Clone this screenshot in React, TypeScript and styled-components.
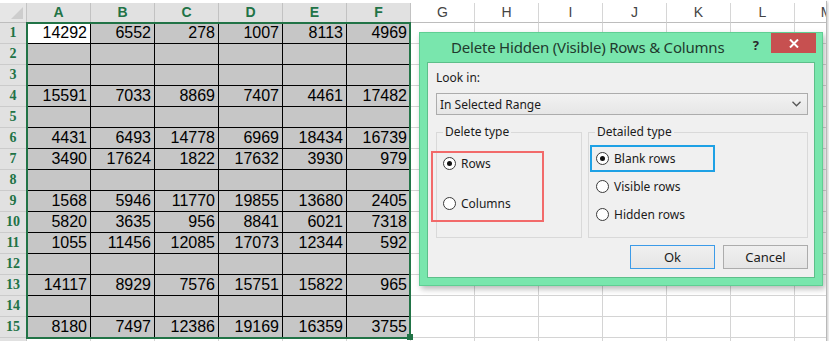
import React from 'react';
import styled, { createGlobalStyle } from 'styled-components';

const GlobalStyle = createGlobalStyle`
  html, body { margin: 0; padding: 0; background: #ffffff; }
  body { font-family: "Liberation Sans", Arial, sans-serif; }
`;

const GREEN = '#217346';

const Frame = styled.div`
  position: relative;
  width: 826px;
  height: 341px;
  box-sizing: border-box;
  padding-top: 3px;
  overflow: hidden;
  background: #ffffff;
  box-shadow: 1px 1px 0 #b9b9b9, 2px 2px 3px rgba(0, 0, 0, 0.22);
`;

const Sheet = styled.div`
  display: grid;
  grid-template-columns: 27px repeat(13, 64px);
  grid-template-rows: 20px repeat(16, 21px);
`;

const Corner = styled.div`
  position: relative;
  background: #e6e6e6;
  border-right: 1px solid #c4c4c4;
  border-bottom: 1px solid #bdbdbd;
`;

const CornerTriangle = styled.span`
  position: absolute;
  right: 3px;
  bottom: 3px;
  width: 0;
  height: 0;
  border-left: 12px solid transparent;
  border-bottom: 12px solid #cdcdcd;
`;

const ColHeader = styled.div<{ $selected: boolean }>`
  box-sizing: border-box;
  background: ${(p) => (p.$selected ? '#e1e1e1' : '#ffffff')};
  border-right: 1px solid ${(p) => (p.$selected ? '#c2c2c2' : '#d6d6d6')};
  border-bottom: 1px solid #bdbdbd;
  color: ${(p) => (p.$selected ? GREEN : '#444444')};
  font-weight: ${(p) => (p.$selected ? 700 : 400)};
  font-size: 14px;
  line-height: 19px;
  text-align: center;
`;

const RowHeader = styled.div`
  box-sizing: border-box;
  background: #e1e1e1;
  border-right: 1px solid #c4c4c4;
  border-bottom: 1px solid #cbcbcb;
  color: ${GREEN};
  font-family: "Liberation Serif", "Times New Roman", serif;
  font-weight: 700;
  font-size: 14px;
  line-height: 20px;
  text-align: center;
`;

type CellKind = 'data' | 'active' | 'blank';

const Cell = styled.div<{ $kind: CellKind }>`
  box-sizing: border-box;
  background: ${(p) => (p.$kind === 'data' ? '#c6c6c6' : '#ffffff')};
  border-right: 1px solid ${(p) => (p.$kind === 'blank' ? '#d4d4d4' : '#000000')};
  border-bottom: 1px solid ${(p) => (p.$kind === 'blank' ? '#d4d4d4' : '#000000')};
  color: #000000;
  font-family: "Liberation Sans", Arial, sans-serif;
  font-size: 16px;
  line-height: 20px;
  text-align: right;
  padding-right: 3px;
  white-space: nowrap;
  overflow: hidden;
`;

const Selection = styled.div`
  position: absolute;
  left: 26px;
  top: 22px;
  width: 385px;
  height: 317px;
  box-sizing: border-box;
  border: 2px solid ${GREEN};
  pointer-events: none;
`;

const FillHandle = styled.div`
  position: absolute;
  left: 407px;
  top: 334px;
  width: 6px;
  height: 6px;
  background: ${GREEN};
`;

/* ---------- Dialog ---------- */

const Dialog = styled.div`
  position: absolute;
  left: 419px;
  top: 32px;
  width: 404px;
  height: 254px;
  box-sizing: border-box;
  display: flex;
  flex-direction: column;
  padding: 0 7px 7px 7px;
  background: #79e6ad;
  border: 1px solid #5fcf93;
  box-shadow: 2px 3px 6px rgba(0, 0, 0, 0.28);
  font-family: "Noto Sans", "Open Sans", sans-serif;
  color: #1b1b1b;
`;

const TitleBar = styled.div`
  display: flex;
  align-items: flex-start;
  height: 29px;
  margin: 0 -7px;
`;

const Title = styled.div`
  margin-left: 31px;
  font-size: 15px;
  line-height: 29px;
  color: #213a2e;
  letter-spacing: -0.2px;
  white-space: nowrap;
`;

const Help = styled.div`
  margin-left: auto;
  margin-right: 12px;
  font-size: 13px;
  font-weight: 700;
  line-height: 24px;
  color: #2a2a2a;
`;

const CloseButton = styled.div`
  width: 45px;
  height: 20px;
  margin-right: 6px;
  background: #c75050;
  display: flex;
  align-items: center;
  justify-content: center;
`;

const Panel = styled.div`
  flex: 1;
  display: flex;
  flex-direction: column;
  background: #f0f0f0;
  border: 1px solid #5dbf8a;
  padding: 0 6px 8px 8px;
`;

const FieldLabel = styled.div`
  margin-top: 7px;
  font-size: 12px;
  line-height: 16px;
`;

const Select = styled.div`
  margin-top: 7px;
  height: 22px;
  box-sizing: border-box;
  border: 1px solid #acacac;
  background: linear-gradient(#f2f2f2, #e6e6e6);
  display: flex;
  align-items: center;
  justify-content: space-between;
  padding: 0 6px 0 3px;
  font-size: 12px;
`;

const Groups = styled.div`
  margin-top: 17px;
  height: 106px;
  display: flex;
  gap: 6px;
`;

const GroupBox = styled.div<{ $width?: number }>`
  position: relative;
  box-sizing: border-box;
  flex: ${(p) => (p.$width ? `0 0 ${p.$width}px` : '1')};
  border: 1px solid #d9d9d9;
`;

const Legend = styled.div`
  display: block;
  width: fit-content;
  margin: -9px 0 0 6px;
  padding: 0 2px;
  background: #f0f0f0;
  font-size: 12px;
  line-height: 16px;
`;

const RadioList = styled.div<{ $padTop: number; $gap: number; $padLeft: number }>`
  display: flex;
  flex-direction: column;
  padding-top: ${(p) => p.$padTop}px;
  padding-left: ${(p) => p.$padLeft}px;
  gap: ${(p) => p.$gap}px;
`;

const RadioRow = styled.div`
  display: flex;
  align-items: center;
  gap: 5px;
  height: 16px;
  font-size: 12px;
`;

const RadioCircle = styled.span<{ $checked?: boolean }>`
  position: relative;
  width: 13px;
  height: 13px;
  box-sizing: border-box;
  border-radius: 50%;
  border: 1px solid #3a3a3a;
  background: #ffffff;
  flex: 0 0 auto;
  &::after {
    content: '';
    display: ${(p) => (p.$checked ? 'block' : 'none')};
    position: absolute;
    left: 3px;
    top: 3px;
    width: 5px;
    height: 5px;
    border-radius: 50%;
    background: #111111;
  }
`;

const Highlight = styled.div<{ $color: string; $l: number; $t: number; $w: number; $h: number }>`
  position: absolute;
  left: ${(p) => p.$l}px;
  top: ${(p) => p.$t}px;
  width: ${(p) => p.$w}px;
  height: ${(p) => p.$h}px;
  box-sizing: border-box;
  border: 2px solid ${(p) => p.$color};
  pointer-events: none;
`;

const ButtonRow = styled.div`
  margin-top: 7px;
  display: flex;
  justify-content: flex-end;
  gap: 8px;
`;

const Button = styled.div<{ $default?: boolean }>`
  width: 85px;
  height: 24px;
  box-sizing: border-box;
  border: 1px solid ${(p) => (p.$default ? '#3c9be8' : '#acacac')};
  background: linear-gradient(#f0f0f0, #e5e5e5);
  display: flex;
  align-items: center;
  justify-content: center;
  font-size: 13px;
  color: #1b1b1b;
`;

const data: (number[] | null)[] = [
  [14292, 6552, 278, 1007, 8113, 4969],
  null,
  null,
  [15591, 7033, 8869, 7407, 4461, 17482],
  null,
  [4431, 6493, 14778, 6969, 18434, 16739],
  [3490, 17624, 1822, 17632, 3930, 979],
  null,
  [1568, 5946, 11770, 19855, 13680, 2405],
  [5820, 3635, 956, 8841, 6021, 7318],
  [1055, 11456, 12085, 17073, 12344, 592],
  null,
  [14117, 8929, 7576, 15751, 15822, 965],
  null,
  [8180, 7497, 12386, 19169, 16359, 3755],
];

const columns = ['A', 'B', 'C', 'D', 'E', 'F', 'G', 'H', 'I', 'J', 'K', 'L', 'M'];

function Radio({ label, checked }: { label: string; checked?: boolean }) {
  return (
    <RadioRow>
      <RadioCircle $checked={checked} />
      <span>{label}</span>
    </RadioRow>
  );
}

export default function App() {
  const cells: React.ReactNode[] = [];
  cells.push(
    <Corner key="corner">
      <CornerTriangle />
    </Corner>
  );
  columns.forEach((c, i) => {
    cells.push(
      <ColHeader key={`h${c}`} $selected={i < 6}>
        {c}
      </ColHeader>
    );
  });
  for (let r = 0; r < 16; r++) {
    const row = r < 15 ? data[r] : null;
    cells.push(<RowHeader key={`r${r}`}>{r < 15 ? r + 1 : ''}</RowHeader>);
    columns.forEach((c, ci) => {
      let kind: CellKind = 'blank';
      if (r < 15 && ci < 6) kind = r === 0 && ci === 0 ? 'active' : 'data';
      cells.push(
        <Cell key={`${c}${r}`} $kind={kind}>
          {row && ci < 6 ? row[ci] : ''}
        </Cell>
      );
    });
  }

  return (
    <>
      <GlobalStyle />
      <Frame>
        <Sheet>{cells}</Sheet>
        <Selection />
        <FillHandle />
        <Dialog>
          <TitleBar>
            <Title>Delete Hidden (Visible) Rows &amp; Columns</Title>
            <Help>?</Help>
            <CloseButton>
              <svg width="10" height="9" viewBox="0 0 10 9">
                <path d="M1 0.5 L9 8.5 M9 0.5 L1 8.5" stroke="#ffffff" strokeWidth="2" />
              </svg>
            </CloseButton>
          </TitleBar>
          <Panel>
            <FieldLabel>Look in:</FieldLabel>
            <Select>
              <span>In Selected Range</span>
              <svg width="9" height="6" viewBox="0 0 9 6">
                <path d="M0.5 0.8 L4.5 4.8 L8.5 0.8" fill="none" stroke="#555555" strokeWidth="1.3" />
              </svg>
            </Select>
            <Groups>
              <GroupBox $width={146}>
                <Legend>Delete type</Legend>
                <RadioList $padTop={15} $gap={24} $padLeft={6}>
                  <Radio label="Rows" checked />
                  <Radio label="Columns" />
                </RadioList>
                <Highlight $color="#f26a6a" $l={-6} $t={18} $w={113} $h={71} />
              </GroupBox>
              <GroupBox>
                <Legend>Detailed type</Legend>
                <RadioList $padTop={10} $gap={12} $padLeft={7}>
                  <Radio label="Blank rows" checked />
                  <Radio label="Visible rows" />
                  <Radio label="Hidden rows" />
                </RadioList>
                <Highlight $color="#1ea1e5" $l={1} $t={12} $w={125} $h={27} />
              </GroupBox>
            </Groups>
            <ButtonRow>
              <Button $default>Ok</Button>
              <Button>Cancel</Button>
            </ButtonRow>
          </Panel>
        </Dialog>
      </Frame>
    </>
  );
}
